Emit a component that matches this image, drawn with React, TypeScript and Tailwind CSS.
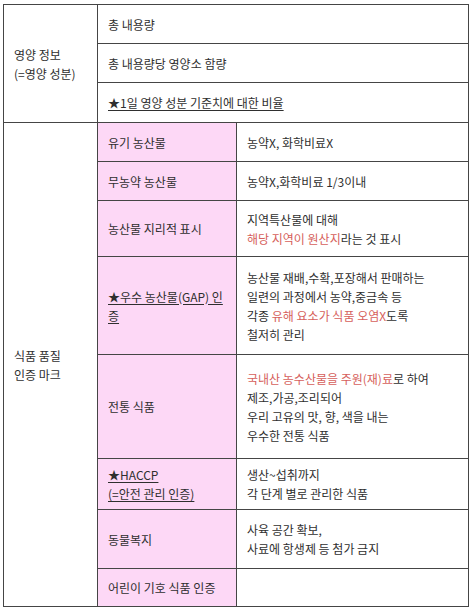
import React from "react";

const red = "text-[#d65f5c]";

type Row = { name: React.ReactNode; desc?: React.ReactNode; h: string };

const certRows: Row[] = [
  { name: "유기 농산물", desc: "농약X, 화학비료X", h: "h-[39px]" },
  { name: "무농약 농산물", desc: "농약X,화학비료 1/3이내", h: "h-[39px]" },
  {
    name: "농산물 지리적 표시",
    desc: (
      <>
        지역특산물에 대해
        <br />
        <span className={red}>해당 지역이 원산지</span>라는 것 표시
      </>
    ),
    h: "h-[56px]",
  },
  {
    name: <span className="underline underline-offset-2">★우수 농산물(GAP) 인증</span>,
    desc: (
      <>
        농산물 재배,수확,포장해서 판매하는
        <br />
        일련의 과정에서 농약,중금속 등
        <br />
        각종 <span className={red}>유해 요소가 식품 오염X</span>도록
        <br />
        철저히 관리
      </>
    ),
    h: "h-[98px]",
  },
  {
    name: "전통 식품",
    desc: (
      <>
        <span className={red}>국내산 농수산물을 주원(재)료</span>로 하여
        <br />
        제조,가공,조리되어
        <br />
        우리 고유의 맛, 향, 색을 내는
        <br />
        우수한 전통 식품
      </>
    ),
    h: "h-[104px]",
  },
  {
    name: (
      <span className="underline underline-offset-2">
        ★HACCP
        <br />
        (=안전 관리 인증)
      </span>
    ),
    desc: (
      <>
        생산~섭취까지
        <br />
        각 단계 별로 관리한 식품
      </>
    ),
    h: "h-[51px]",
  },
  {
    name: "동물복지",
    desc: (
      <>
        사육 공간 확보,
        <br />
        사료에 항생제 등 첨가 금지
      </>
    ),
    h: "h-[59px]",
  },
  { name: "어린이 기호 식품 인증", h: "h-[38px]" },
];

const cell = "border border-[#454545] px-[10px] align-middle";

export default function App() {
  return (
    <div className="min-h-[612px] w-[474px] bg-white pl-[3px] pt-[4px] font-['Noto_Sans_CJK_KR','Noto_Sans',sans-serif] text-[12px] leading-[19px] text-[#2f2f2f]">
      <table className="w-[466px] table-fixed border-collapse">
        <colgroup>
          <col className="w-[94px]" />
          <col className="w-[139px]" />
          <col />
        </colgroup>
        <tbody>
          <tr className="h-[39px]">
            <td rowSpan={3} className={cell}>
              영양 정보
              <br />
              (=영양 성분)
            </td>
            <td colSpan={2} className={cell}>
              총 내용량
            </td>
          </tr>
          <tr className="h-[39px]">
            <td colSpan={2} className={cell}>
              총 내용량당 영양소 함량
            </td>
          </tr>
          <tr className="h-[40px]">
            <td colSpan={2} className={cell}>
              <span className="underline underline-offset-2">★1일 영양 성분 기준치에 대한 비율</span>
            </td>
          </tr>
          {certRows.map((r, i) => (
            <tr key={i} className={r.h}>
              {i === 0 && (
                <td rowSpan={certRows.length} className={cell}>
                  식품 품질
                  <br />
                  인증 마크
                </td>
              )}
              <td className={`${cell} break-all bg-[#fdd8f6]`}>{r.name}</td>
              <td className={cell}>{r.desc}</td>
            </tr>
          ))}
        </tbody>
      </table>
    </div>
  );
}
